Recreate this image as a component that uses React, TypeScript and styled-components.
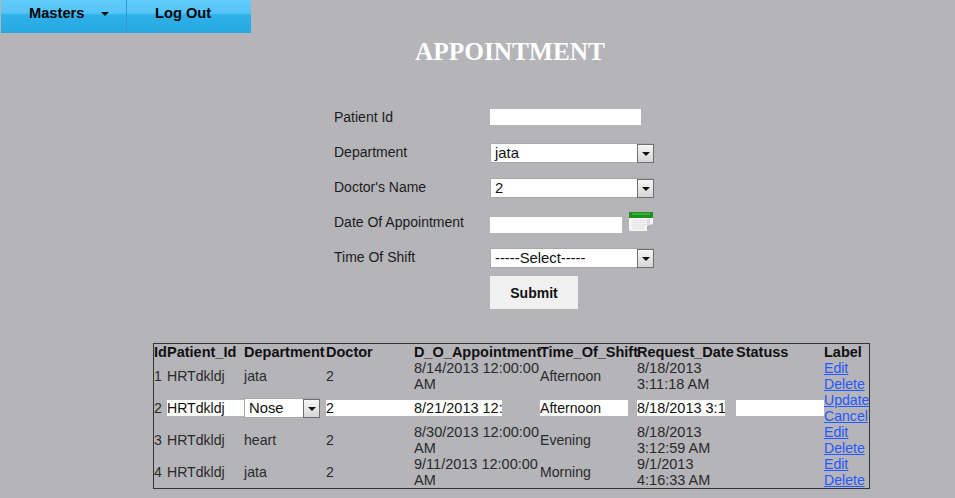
import React from 'react';
import styled, { createGlobalStyle } from 'styled-components';

const GlobalStyle = createGlobalStyle`
html, body {
    margin: 0;
    padding: 0;
    background: #b4b4b9;
    font-family: "Liberation Sans", Arial, sans-serif;
    font-size: 14px;
    color: #222;
}
`

const rows = [
    { id: 1, patient: 'HRTdkldj', dept: 'jata', doctor: '2', date: '8/14/2013 12:00:00 AM', shift: 'Afternoon', request: '8/18/2013 3:11:18 AM' },
    { id: 2, patient: 'HRTdkldj', dept: 'Nose', doctor: '2', date: '8/21/2013 12:00:00 AM', shift: 'Afternoon', request: '8/18/2013 3:11:18 AM', editing: true },
    { id: 3, patient: 'HRTdkldj', dept: 'heart', doctor: '2', date: '8/30/2013 12:00:00 AM', shift: 'Evening', request: '8/18/2013 3:12:59 AM' },
    { id: 4, patient: 'HRTdkldj', dept: 'jata', doctor: '2', date: '9/11/2013 12:00:00 AM', shift: 'Morning', request: '9/1/2013 4:16:33 AM' },
];

const headers = ['Id', 'Patient_Id', 'Department', 'Doctor', 'D_O_Appointment', 'Time_Of_Shift', 'Request_Date', 'Statuss', 'Label'];

function CalendarIcon() {
    return (
        <svg width="24" height="19" viewBox="0 0 24 19">
            <path d="M0 5 H24 V12 L18 19 H1 L0 18 Z" fill="#f6f5f3" />
            <path d="M0 0 H24 V6 H0 Z" fill="#1f8f1f" />
            <path d="M3 1 H21 V3 H3 Z" fill="#35b335" />
            <path d="M3 8.5 H18 M3 10.5 H18 M3 12.5 H18 M3 14.5 H16 M3 16.5 H14" stroke="#e4e4e4" strokeWidth="1" />
            <path d="M5.5 7 V18 M8.5 7 V18 M11.5 7 V18 M14.5 7 V18" stroke="#e8e8e8" strokeWidth="1" />
            <path d="M19.5 7 V13" stroke="#e2d6f2" strokeWidth="3" />
            <path d="M24 12 L18 19 V14 Z" fill="#a9a9a9" />
        </svg>
    );
}

function DropSelect(props: { width: number; value: string }) {
    return (
        <SelectBox $width={props.width}>
            <SelectValue>{props.value}</SelectValue>
            <SelectArrow />
        </SelectBox>
    );
}

function App() {
    return (
        <>
            <GlobalStyle />
            <Nav>
                <NavItem>Masters<Caret /></NavItem>
                <NavItem $divider>Log Out</NavItem>
            </Nav>
            <Title>APPOINTMENT</Title>
            <Form onSubmit={(event) => { event.preventDefault() }}>
                <FormRow $height={35}>
                    <Label>Patient Id</Label>
                    <TextField $width={151} />
                </FormRow>
                <FormRow $height={35}>
                    <Label>Department</Label>
                    <SelectSlot><DropSelect width={164} value="jata" /></SelectSlot>
                </FormRow>
                <FormRow $height={35}>
                    <Label>Doctor's Name</Label>
                    <SelectSlot><DropSelect width={164} value="2" /></SelectSlot>
                </FormRow>
                <FormRow $height={35}>
                    <Label>Date Of Appointment</Label>
                    <TextField $width={132} $drop={3} />
                    <CalendarSlot><CalendarIcon /></CalendarSlot>
                </FormRow>
                <FormRow $height={35}>
                    <Label>Time Of Shift</Label>
                    <SelectSlot><DropSelect width={164} value="-----Select-----" /></SelectSlot>
                </FormRow>
                <SubmitRow>
                    <SubmitButton type="submit">Submit</SubmitButton>
                </SubmitRow>
            </Form>
            <TableWrap>
                <Grid>
                    <thead>
                        <tr>
                            {headers.map((h) => <Th key={h}>{h}</Th>)}
                        </tr>
                    </thead>
                    <tbody>
                        {rows.map((r) => (
                            <tr key={r.id}>
                                <Td>{r.id}</Td>
                                <Td>{r.editing ? <CellInput $width={77} readOnly value={r.patient} /> : r.patient}</Td>
                                <Td>{r.editing ? <DropSelect width={76} value={r.dept} /> : r.dept}</Td>
                                <Td>{r.editing ? <CellInput $width={88} readOnly value={r.doctor} /> : r.doctor}</Td>
                                <Td $digits>{r.editing ? <CellInput $width={88} readOnly value={r.date} /> : r.date}</Td>
                                <Td>{r.editing ? <CellInput $width={88} readOnly value={r.shift} /> : r.shift}</Td>
                                <Td $digits>{r.editing ? <CellInput $width={88} readOnly value={r.request} /> : r.request}</Td>
                                <Td>{r.editing ? <CellInput $width={88} readOnly value="" /> : null}</Td>
                                <Td>
                                    <LinkCell href="#">{r.editing ? 'Update' : 'Edit'}</LinkCell>
                                    <LinkCell href="#">{r.editing ? 'Cancel' : 'Delete'}</LinkCell>
                                </Td>
                            </tr>
                        ))}
                    </tbody>
                </Grid>
            </TableWrap>
        </>
    )
}

export default App;

const Nav = styled.nav`
display: flex;
width: 250px;
height: 33px;
margin-left: 1px;
background: linear-gradient(#62ccfd 0%, #54c4f7 40%, #2fb0e8 45%, #27a9e1 100%);
`

const NavItem = styled.div<{ $divider?: boolean }>`
display: flex;
align-items: center;
width: 125px;
padding: 0 0 8px 28px;
box-sizing: border-box;
height: 33px;
font-weight: bold;
font-size: 14.67px;
color: #050505;
border-left: ${(p) => (p.$divider ? '1px solid #2a9ed4' : 'none')};
`

const Caret = styled.span`
width: 0;
height: 0;
margin-left: 17px;
margin-top: 2px;
border-left: 4px solid transparent;
border-right: 4px solid transparent;
border-top: 4px solid #111;
`

const Title = styled.h1`
margin: 3px 0 0 65px;
height: 30px;
font-family: "Liberation Serif", "Times New Roman", serif;
font-size: 25.33px;
line-height: 30px;
font-weight: bold;
color: #fff;
text-align: center;
`

const Form = styled.form`
margin: 43px 0 0 334px;
width: 340px;
`

const FormRow = styled.div<{ $height: number }>`
display: flex;
align-items: flex-start;
height: ${(p) => p.$height}px;
`

const Label = styled.label`
width: 156px;
height: 18px;
margin-top: -1px;
line-height: 18px;
color: #1c1c1c;
`

const TextField = styled.input<{ $width: number; $drop?: number }>`
width: ${(p) => p.$width}px;
height: 16px;
margin-top: ${(p) => p.$drop ?? 0}px;
padding: 0;
border: none;
background: #fff;
`

const SelectSlot = styled.div`
margin-top: -1px;
`

const CalendarSlot = styled.div`
margin: -2px 0 0 7px;
`

const SelectBox = styled.div<{ $width: number }>`
display: flex;
align-items: center;
width: ${(p) => p.$width}px;
height: 20px;
box-sizing: border-box;
background: #fff;
border: 1px solid #a9a9ad;
border-right: none;
`

const SelectValue = styled.span`
flex: 1;
padding-left: 4px;
line-height: 18px;
font-size: 14.8px;
color: #111;
white-space: nowrap;
overflow: hidden;
`

const SelectArrow = styled.span`
position: relative;
width: 17px;
height: 19px;
box-sizing: border-box;
border: 1px solid #6e6e6e;
background: linear-gradient(#f6f6f6, #d6d6d6);

&::after {
    content: '';
    position: absolute;
    left: 4px;
    top: 7px;
    border-left: 4px solid transparent;
    border-right: 4px solid transparent;
    border-top: 4px solid #111;
}
`

const SubmitRow = styled.div`
margin: -8px 0 0 156px;
`

const SubmitButton = styled.button`
width: 88px;
height: 33px;
padding: 0;
border: none;
background: #f0f0f0;
font-family: "Liberation Sans", Arial, sans-serif;
font-size: 14px;
font-weight: bold;
color: #111;
`

const TableWrap = styled.div`
margin: 34px 0 0 153px;
`

const Grid = styled.table`
width: 717px;
table-layout: fixed;
border-collapse: separate;
border-spacing: 0;
border: 1px solid #333;
line-height: 16px;
col, th, td { padding: 0; }
th:nth-child(1), td:nth-child(1) { width: 13px; }
th:nth-child(2), td:nth-child(2) { width: 77px; }
th:nth-child(3), td:nth-child(3) { width: 82px; }
th:nth-child(4), td:nth-child(4) { width: 88px; }
th:nth-child(5), td:nth-child(5) { width: 126px; }
th:nth-child(6), td:nth-child(6) { width: 97px; }
th:nth-child(7), td:nth-child(7) { width: 99px; }
th:nth-child(8), td:nth-child(8) { width: 88px; }
`

const Th = styled.th`
height: 16px;
text-align: left;
font-size: 14.5px;
font-weight: bold;
color: #111;
white-space: nowrap;
`

const Td = styled.td<{ $digits?: boolean }>`
height: 32px;
font-size: ${(p) => (p.$digits ? '14.5px' : '14.1px')};
color: #2a2a2a;
vertical-align: middle;
`

const CellInput = styled.input<{ $width: number }>`
display: block;
width: ${(p) => p.$width}px;
height: 16px;
padding: 0;
border: none;
outline: none;
background: #fff;
color: #111;
font-family: "Liberation Sans", Arial, sans-serif;
font-size: inherit;
`

const LinkCell = styled.a`
display: block;
color: #2558ff;
text-decoration: underline;
white-space: nowrap;
`
